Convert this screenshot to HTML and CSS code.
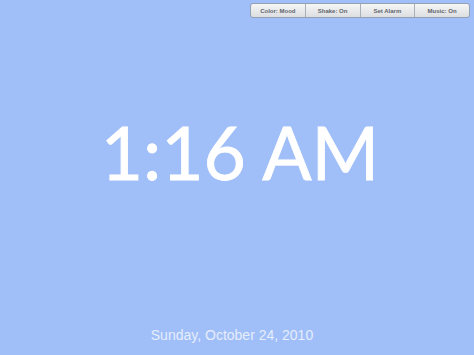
FILE: index.html
```html
<!DOCTYPE html>
<html>
<head>
<meta charset="utf-8">
<link rel="stylesheet" href="styles.css">
</head>
<body>
<div class="screen">
  <div class="toolbar">
    <div class="segmented">
      <div class="seg">Color: Mood</div>
      <div class="seg">Shake: On</div>
      <div class="seg">Set Alarm</div>
      <div class="seg">Music: On</div>
    </div>
  </div>
  <div class="clock">1:16 AM</div>
  <div class="date">Sunday, October 24, 2010</div>
</div>
</body>
</html>
```
FILE: styles.css
```css
html, body {
  margin: 0;
  padding: 0;
}
body {
  background: #a0bff8;
  width: 474px;
  height: 355px;
  overflow: hidden;
}
.screen {
  height: 355px;
  display: flex;
  flex-direction: column;
}
.toolbar {
  display: flex;
  justify-content: flex-end;
  padding: 3px 4px 0 0;
}
.segmented {
  display: flex;
  width: 218px;
  height: 13px;
  border: 1px solid #94a0b4;
  border-radius: 3px;
  overflow: hidden;
  background: linear-gradient(#f6f6f6, #dcdee1);
}
.seg {
  flex: 1;
  display: flex;
  align-items: center;
  justify-content: center;
  font-family: "Liberation Sans", Arial, sans-serif;
  font-size: 6px;
  font-weight: bold;
  color: #60656c;
  border-left: 1px solid #aab0b9;
}
.seg:first-child {
  border-left: none;
}
.clock {
  margin-top: 98px;
  padding-left: 6px;
  text-align: center;
  font-family: "Lato", sans-serif;
  font-size: 73px;
  line-height: 73px;
  color: #ffffff;
  -webkit-text-stroke: 0.8px #ffffff;
}
.date {
  margin-top: auto;
  margin-bottom: 12px;
  padding-right: 10px;
  text-align: center;
  font-family: "Liberation Sans", Arial, sans-serif;
  font-size: 14px;
  color: #e6edfc;
}
```
